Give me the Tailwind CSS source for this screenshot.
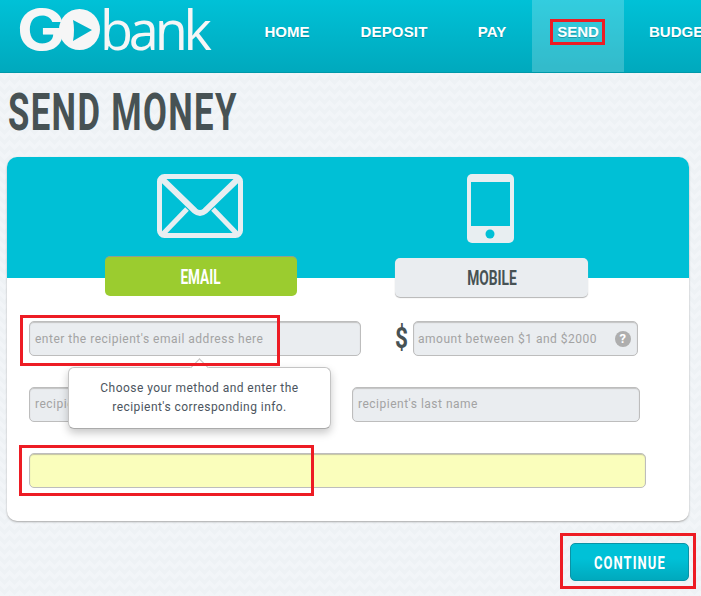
<!DOCTYPE html>
<html lang="en">
<head>
    <meta charset="UTF-8">
    <title>GObank - Send Money</title>
    <script src="https://cdn.jsdelivr.net/npm/@tailwindcss/browser@4"></script>
</head>
<body class="relative w-[701px] h-[596px] overflow-hidden bg-[#f2f5f8] bg-[linear-gradient(135deg,#eef2f5_25%,transparent_25%),linear-gradient(225deg,#eef2f5_25%,transparent_25%),linear-gradient(315deg,#eef2f5_25%,transparent_25%),linear-gradient(45deg,#eef2f5_25%,transparent_25%)] bg-[length:10px_10px] bg-[position:-5px_0,-5px_0,0_0,0_0] font-['Liberation_Sans',sans-serif]">
    <!-- header -->
    <header class="flex h-[73px] overflow-hidden bg-gradient-to-b from-[#00c1d7] to-[#00a9bd] border-b border-[#0099a9]">
        <div class="relative w-[246px] shrink-0 text-[#f6f6f6]">
            <span class="absolute left-[17px] top-[1px] origin-left scale-x-[1.14] font-['Inter',sans-serif] font-bold text-[57px] leading-[58px]">G</span>
            <svg class="absolute left-[59px] top-[9px] w-[41px] h-[41px]" viewBox="0 0 41 41"><circle cx="20.5" cy="20.5" r="20.5" fill="#f6f6f6"/><path d="M14 11 L33 21 L14 32 Q16 21 14 11 Z" fill="#00b4ca"/></svg>
            <span class="absolute left-[100px] top-0 font-['Open_Sans',sans-serif] font-medium text-[54px] leading-[58px] tracking-[-4.2px]">bank</span>
        </div>
        <nav class="flex text-white font-bold text-[15px] [text-shadow:0_1px_0_rgba(0,80,90,0.4)]">
            <a class="w-[82px] flex items-center justify-center pb-[8px]">HOME</a>
            <a class="w-[104px] ml-[14px] flex items-center justify-center pb-[8px] tracking-[0.15px]">DEPOSIT</a>
            <a class="w-[86px] pl-[6px] flex items-center justify-center pb-[8px]">PAY</a>
            <a class="w-[92px] flex items-center justify-center pb-[8px] bg-white/20">SEND</a>
            <a class="w-[77px] flex items-center pl-[25px] pb-[8px] whitespace-nowrap">BUDGET</a>
        </nav>
    </header>

    <main class="w-[682px] ml-[7px]">
        <h1 class="h-[84px] pl-[1px] pt-[10px] font-['Roboto',sans-serif] font-bold text-[51px] leading-[60px] text-[#475254] whitespace-nowrap"><span class="inline-block origin-left scale-x-[0.68] tracking-[2px]">SEND MONEY</span></h1>

        <!-- card -->
        <section class="h-[364px] rounded-[10px] bg-white shadow-[0_1px_2px_#a8a8a8] overflow-hidden">
            <div class="flex h-[121px] bg-[#00c0d6]">
                <div class="w-[98px]"></div>
                <div class="w-[192px] h-full flex justify-center pt-[17px] pr-[2px]">
                    <svg class="w-[86px] h-[64px]" viewBox="0 0 86 64" fill="none" stroke="#e8eef1"><rect x="2.5" y="2.5" width="81" height="59" rx="5" stroke-width="5"/><path d="M4 4 L38 37 Q43 41 48 37 L82 4" stroke-width="6"/><path d="M5 61 L30 35 M81 61 L56 35" stroke-width="5"/></svg>
                </div>
                <div class="w-[98px]"></div>
                <div class="w-[193px] h-full flex justify-center pt-[17px] pr-[3px]">
                    <svg class="w-[47px] h-[69px]" viewBox="0 0 47 69"><rect width="47" height="69" rx="5" fill="#e8eef1"/><rect x="4" y="8" width="39" height="44" fill="#00c0d6"/><circle cx="23" cy="60" r="4.5" fill="#00c0d6"/></svg>
                </div>
            </div>
            <div class="flex -mt-[22px] h-[43px] font-['Roboto',sans-serif] font-bold text-[20px]">
                <div class="ml-[98px] w-[192px] h-[40px] flex items-center justify-center rounded-[5px] bg-[#9bcc2f] border-t border-[#8f9f8f] text-white"><span class="scale-x-[0.68]">EMAIL</span></div>
                <div class="ml-[98px] w-[193px] h-[39px] mt-[2px] flex items-center justify-center rounded-[5px] bg-[#eaedf0] shadow-[0_1px_1px_#b5b5b5] text-[#475254]"><span class="scale-x-[0.69]">MOBILE</span></div>
            </div>

            <form class="px-[22px] pt-[22px] text-[12px] text-[#a3a3a3] tracking-[0.5px] font-['Roboto',sans-serif]">
                <div class="flex h-[35px]">
                    <div class="w-[332px] flex items-center pl-[5px] rounded-[5px] bg-[#eaedf0] border border-[#bdbdbd] shadow-[inset_0_1px_1px_#c4c4c4]">enter the recipient's email address here</div>
                    <span class="ml-[32px] mr-[2px] w-[18px] text-center font-bold text-[29px] leading-[34px] text-[#475254]"><span class="inline-block scale-x-[0.78]">$</span></span>
                    <div class="w-[225px] flex items-center justify-between px-[4px] rounded-[5px] bg-[#eaedf0] border border-[#bdbdbd] shadow-[inset_0_1px_1px_#c4c4c4]">
                        <span>amount between $1 and $2000</span>
                        <span class="w-[16px] h-[16px] mr-[2px] rounded-full bg-[#aeaeae] text-white font-bold text-[13px] leading-[16px] text-center">?</span>
                    </div>
                </div>
                <div class="flex h-[35px] mt-[31px]">
                    <div class="w-[288px] flex items-center pl-[5px] pb-[1px] rounded-[5px] bg-[#eaedf0] border border-[#bdbdbd] shadow-[inset_0_1px_1px_#c4c4c4]">recipient's first name</div>
                    <div class="ml-[35px] w-[288px] flex items-center pl-[5px] pb-[1px] rounded-[5px] bg-[#eaedf0] border border-[#bdbdbd] shadow-[inset_0_1px_1px_#c4c4c4]">recipient's last name</div>
                </div>
                <div class="h-[35px] w-[617px] mt-[31px] rounded-[5px] bg-[#fafebc] border border-[#bdbdbd] shadow-[inset_0_1px_1px_#c4c4a4]"></div>
            </form>
        </section>

        <div class="flex justify-end mt-[22px]">
            <button class="w-[119px] h-[38px] rounded-[5px] border border-[#0a93a6] bg-gradient-to-b from-[#00c1d7] from-40% to-[#00a9bd] text-white font-['Roboto',sans-serif] font-bold text-[18px]"><span class="inline-block scale-x-[0.72] tracking-[1.5px]">CONTINUE</span></button>
        </div>
    </main>

    <!-- tooltip -->
    <div class="absolute left-[68px] top-[367px] w-[263px] h-[62px] flex items-center justify-center text-center rounded-[6px] bg-white border border-[#c4c4c4] border-b-[#aaaaaa] shadow-[0_4px_8px_rgba(0,0,0,0.22)] font-['Roboto',sans-serif] text-[12px] leading-[19px] tracking-[0.45px] text-[#4c5560]">
        <span class="absolute -top-[7px] left-[124px] w-[13px] h-[13px] rotate-45 bg-white border-t border-l border-[#c4c4c4]"></span>
        <p class="relative">Choose your method and enter the<br>recipient's corresponding info.</p>
    </div>

    <!-- annotation boxes -->
    <div class="absolute left-[550px] top-[19px] w-[55px] h-[26px] border-[3px] border-[#ed1c24]"></div>
    <div class="absolute left-[20px] top-[315px] w-[260px] h-[51px] border-[3px] border-[#ed1c24]"></div>
    <div class="absolute left-[19px] top-[445px] w-[295px] h-[51px] border-[3px] border-[#ed1c24]"></div>
    <div class="absolute left-[560px] top-[533px] w-[136px] h-[56px] border-[3px] border-[#ed1c24]"></div>
</body>
</html>
